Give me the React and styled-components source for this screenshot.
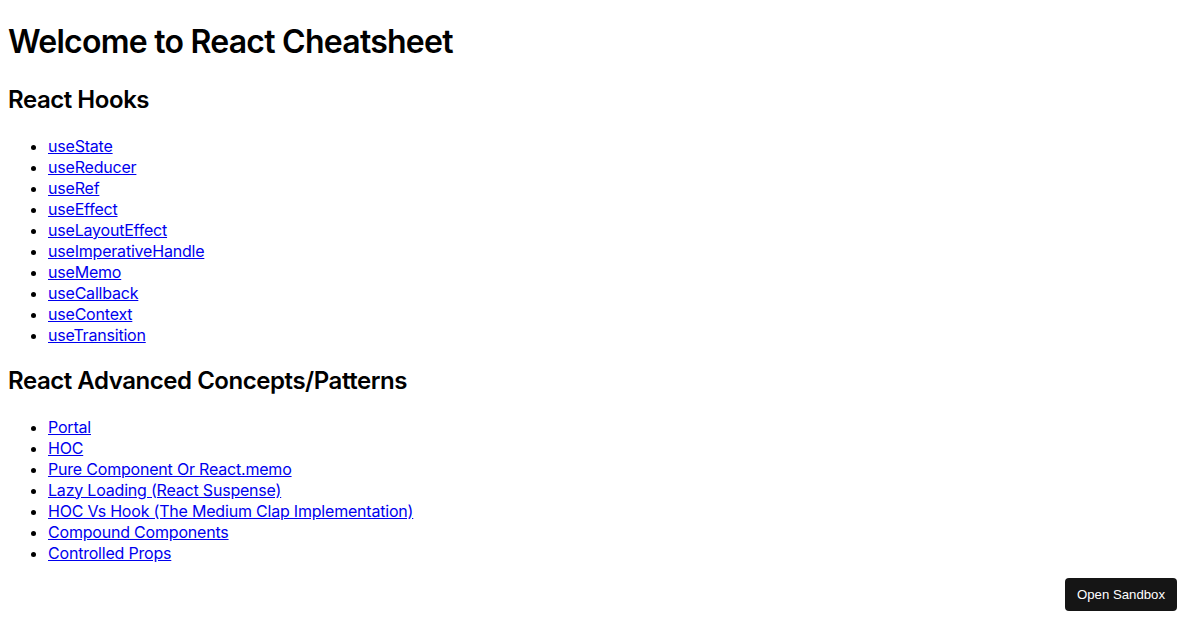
import React from "react";
import styled, { createGlobalStyle } from "styled-components";

const GlobalStyle = createGlobalStyle`
    body {
        margin: 8px;
        background: #fff;
        color: #000;
        font-family: Inter, "Noto Sans", sans-serif;
        line-height: 1.3;
    }
`;

const hooks = [
    "useState",
    "useReducer",
    "useRef",
    "useEffect",
    "useLayoutEffect",
    "useImperativeHandle",
    "useMemo",
    "useCallback",
    "useContext",
    "useTransition",
];

const patterns = [
    "Portal",
    "HOC",
    "Pure Component Or React.memo",
    "Lazy Loading (React Suspense)",
    "HOC Vs Hook (The Medium Clap Implementation)",
    "Compound Components",
    "Controlled Props",
];

const App = () => {
    return (
        <>
            <GlobalStyle />
            <Title>Welcome to React Cheatsheet</Title>
            <Section>React Hooks</Section>
            <List>
                {hooks.map((h) => (
                    <Item key={h}>
                        <Link href="#">{h}</Link>
                    </Item>
                ))}
            </List>
            <Section>React Advanced Concepts/Patterns</Section>
            <List>
                {patterns.map((p) => (
                    <Item key={p}>
                        <Link href="#">{p}</Link>
                    </Item>
                ))}
            </List>
            <SandboxButton>Open Sandbox</SandboxButton>
        </>
    );
};

const Title = styled.h1`
    font-size: 32px;
    font-weight: 600;
    letter-spacing: -0.75px;
    margin: 13.44px 0 21.44px;
`;

const Section = styled.h2`
    font-size: 24px;
    font-weight: 600;
    letter-spacing: -0.45px;
    margin: 19.92px 0;
`;

const List = styled.ul`
    margin: 16px 0;
    padding-left: 40px;
`;

const Item = styled.li`
    font-size: 16px;
    line-height: 21px;
`;

const Link = styled.a`
    color: #0000ee;
    text-decoration: underline;
    letter-spacing: -0.2px;
`;

const SandboxButton = styled.button`
    position: fixed;
    right: 23px;
    bottom: 19px;
    height: 33px;
    padding: 0 12px;
    border: none;
    border-radius: 4px;
    background: #151515;
    color: #fff;
    font-family: "Liberation Sans", Arial, sans-serif;
    font-size: 13.2px;
    cursor: pointer;
`;

export default App;
